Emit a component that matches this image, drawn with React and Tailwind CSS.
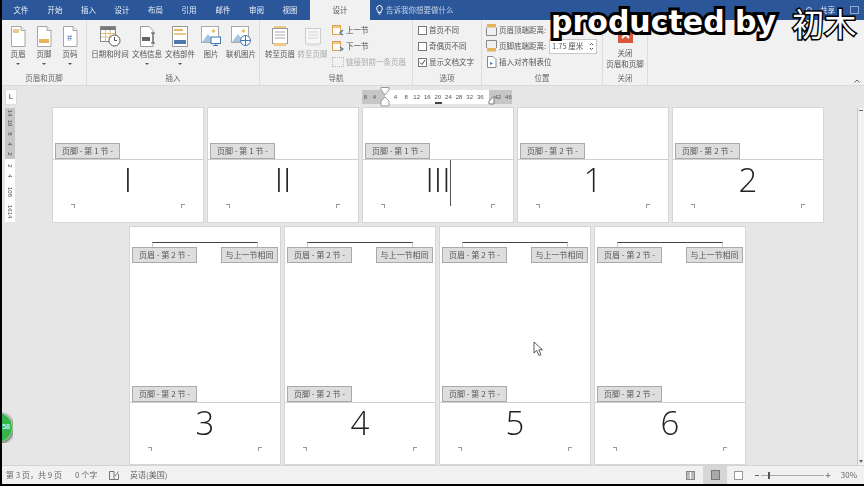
import React from "react";

const tabs = [
  ["文件", "w-[34px]"],
  ["开始", "w-[34px]"],
  ["插入", "w-[33px]"],
  ["设计", "w-[34px]"],
  ["布局", "w-[33px]"],
  ["引用", "w-[34px]"],
  ["邮件", "w-[34px]"],
  ["审阅", "w-[33px]"],
  ["视图", "w-[34px]"],
];

const rulerNums = ["8", "4", "", "4", "8", "12", "16", "20", "24", "28", "32", "36", "", "42", "46"];

const DocIcon = ({ kind }) => (
  <svg width="16" height="21" viewBox="0 0 16 21">
    <path d="M1.5 .5H11L15 4.500V20.500H1.500Z" fill="#fff" stroke="#a6a6a6" />
    <path d="M11 .5V4.500H15" fill="#eee" stroke="#a6a6a6" />
    {kind === "header" && <rect x="3" y="3" width="6" height="4" fill="#edc987" />}
    {kind === "footer" && <rect x="3" y="13" width="10" height="4" fill="#e8b35e" />}
    {kind === "number" && <text x="5" y="15" fontSize="9" fontStyle="italic" fill="#4a6da7" fontFamily="Liberation Sans">#</text>}
  </svg>
);

const CalendarIcon = () => (
  <svg width="21" height="21" viewBox="0 0 21 21">
    <rect x=".5" y=".5" width="15" height="15" fill="#fff" stroke="#8a8a8a" />
    <rect x="1" y="1" width="14" height="3" fill="#777" />
    <path d="M1 7.500H15M1 11H15M5.500 4V15M10 4V15" stroke="#e3bd79" />
    <circle cx="14.500" cy="14.500" r="5.500" fill="#fff" stroke="#555" />
    <path d="M14.500 11V14.500H17" fill="none" stroke="#555" />
  </svg>
);

const InfoIcon = () => (
  <svg width="17" height="21" viewBox="0 0 17 21">
    <path d="M1.500 .5H10L14 4.500V20.500H1.500Z" fill="#fff" stroke="#999" />
    <rect x="3" y="11" width="8" height="4" fill="#666" />
    <path d="M12 7H16M14 7V17M12 17H16" stroke="#555" fill="none" />
  </svg>
);

const PartsIcon = () => (
  <svg width="16" height="21" viewBox="0 0 16 21">
    <rect x=".5" y=".5" width="15" height="20" fill="#fff" stroke="#999" />
    <rect x="2" y="3" width="9" height="2" fill="#e5b66a" />
    <rect x="2" y="7" width="12" height="2" fill="#e5c68f" />
    <rect x="2" y="14" width="12" height="4" fill="#4d77ae" />
  </svg>
);

const PictureIcon = ({ online }) => (
  <svg width="20" height="20" viewBox="0 0 20 20">
    <rect x=".5" y=".5" width="17" height="16" fill="#fff" stroke="#aaa" />
    <circle cx="12.500" cy="5" r="1.800" fill="#ecc06f" />
    <path d="M1 16L7 8L13 16Z" fill="#a9c4e0" />
    {online ? (
      <g fill="#fff" stroke="#3f76b5">
        <circle cx="14.500" cy="14.500" r="5" />
        <path d="M9.500 14.500H19.500M14.500 9.500V19.500" fill="none" />
      </g>
    ) : (
      <g>
        <rect x="10" y="11" width="9.500" height="6.500" fill="#fff" stroke="#3f76b5" />
        <path d="M14.800 17.500V19.500M12 19.500H17" stroke="#3f76b5" />
      </g>
    )}
  </svg>
);

const GotoIcon = ({ disabled, footer }) => (
  <svg width="16" height="20" viewBox="0 0 16 20" className={disabled ? "opacity-40" : ""}>
    {!footer && <rect x="2" y="0" width="12" height="3" fill="#edc987" />}
    <rect x=".5" y="2.500" width="15" height="15" fill="#fff" stroke="#999" />
    <path d="M3 6H13M3 9H13M3 12H13" stroke="#aaa" />
    <rect x="2" y="17" width="12" height="3" fill={footer ? "#ccc" : "#edc987"} />
  </svg>
);

const SmallIcon = ({ dir }) => (
  <svg width="12" height="12" viewBox="0 0 12 12">
    <rect x=".5" y="1.500" width="8" height="9" fill="#fff" stroke="#e0a24f" />
    <rect x="1" y="2" width="7" height="2" fill="#edc987" />
    <path d={dir === "up" ? "M11 6L8 9L11 11" : "M8 7L11 9L8 11"} fill="none" stroke="#3f76b5" strokeWidth="1.300" />
  </svg>
);

const PosIcon = ({ top }) => (
  <svg width="11" height="12" viewBox="0 0 11 12">
    <rect x="1" y={top ? 0 : 8} width="9" height="3.500" fill="#e8b35e" />
    <path d={top ? "M.5 3.500V11.500H10.500V3.500" : "M.5 8V.5H10.500V8"} fill="none" stroke="#888" />
  </svg>
);

const RibbonButton = ({ label, width, icon, caret, grey }) => (
  <div className={`${width} flex flex-col items-center pt-[5px]`}>
    <div className="h-[22px] flex items-center justify-center">{icon}</div>
    <span className={`mt-[1px] h-[11px] whitespace-nowrap leading-[11px] ${grey ? "text-[#aaa]" : ""}`}>{label}</span>
    {caret && <span className="mt-[4px] h-0 w-0 border-x-[2px] border-t-[2px] border-x-transparent border-t-[#555]" />}
  </div>
);

const Group = ({ label, width, children, className = "" }) => (
  <div className={`${width} h-full shrink-0 flex flex-col border-r border-[#dcdcdc]`}>
    <div className={`h-[52px] flex ${className}`}>{children}</div>
    <div className="h-[12px] text-center leading-[12px] text-[#666]">{label}</div>
  </div>
);

const OptionRow = ({ label, checked }) => (
  <div className="h-[16px] flex items-center gap-[2px]">
    <span className="w-[9px] h-[9px] bg-white border border-[#777] flex items-center justify-center">
      {checked && (
        <svg width="7" height="7" viewBox="0 0 7 7">
          <path d="M1 3.500L3 5.500L6 1" fill="none" stroke="#444" />
        </svg>
      )}
    </span>
    <span>{label}</span>
  </div>
);

const Tag = ({ children, className = "" }) => (
  <div className={`absolute h-[16px] bg-[#dedede] border border-[#a9a9a9] text-[#555] text-[8px] leading-[14px] text-center whitespace-nowrap ${className}`}>
    {children}
  </div>
);

const Corners = ({ className = "" }) => (
  <div className={`flex justify-between px-[18px] ${className}`}>
    <span className="w-[4px] h-[4px] border-t border-r border-[#999]" />
    <span className="w-[4px] h-[4px] border-t border-l border-[#999]" />
  </div>
);

const FooterNumber = ({ value, section, topHeight, caret }) => (
  <>
    <div className="relative" style={{ height: topHeight }}>
      <Tag className="left-[2px] bottom-0 w-[65px]">页脚 - 第 {section} 节 -</Tag>
    </div>
    <div className="relative flex-1 border-t border-[#cfcfcf] flex flex-col">
      <div className="h-[44px] pb-[6px] flex items-center justify-center leading-none text-[#222] text-[33px] font-[350] font-['Open_Sans']">
        {value}
      </div>
      <Corners />
      {caret && <div className="absolute left-[87px] top-0 w-[1px] h-[46px] bg-[#555]" />}
    </div>
  </>
);

const TopPage = ({ value, section, caret }) => (
  <div className="w-[150px] h-[114px] bg-white shadow-[0_0_0_1px_#d6d6d6] flex flex-col">
    <FooterNumber value={value} section={section} caret={caret} topHeight={51} />
  </div>
);

const BottomPage = ({ value }) => (
  <div className="w-[150px] h-[237px] bg-white shadow-[0_0_0_1px_#d6d6d6] flex flex-col">
    <div className="relative h-[20px] shrink-0">
      <div className="absolute left-[22px] top-[15px] w-[106px] h-[5px] border-t border-x border-t-[#444] border-x-[#ccc]" />
      <Tag className="left-[2px] top-[20px] w-[65px] z-10">页眉 - 第 2 节 -</Tag>
      <Tag className="right-[2px] top-[20px] w-[57px] z-10">与上一节相同</Tag>
    </div>
    <FooterNumber value={value} section={2} topHeight={155} />
  </div>
);

export default function App() {
  return (
    <div className="relative w-[864px] h-[486px] overflow-hidden bg-black text-[7.5px] text-[#555] font-['Noto_Sans_CJK_SC',sans-serif]">
      <div className="ml-[2px] h-[484px] flex flex-col bg-[#e6e6e6] blur-[0.3px]">
        {/* tabs */}
        <div className="h-[20px] shrink-0 bg-[#2b579a] flex items-center text-[#e8eef7]">
          <div className="pl-[2px] flex text-center">
            {tabs.map(([t, w]) => (
              <span key={t} className={w}>
                {t}
              </span>
            ))}
          </div>
          <div className="ml-[3px] w-[60px] h-full bg-[#f1f1f1] text-[#555] flex items-center justify-center">设计</div>
          <div className="ml-[6px] flex items-center gap-[3px] text-[#c5d3e8]">
            <svg width="7" height="10" viewBox="0 0 7 10">
              <path d="M3.500 .5A3 3 0 0 1 5 6V7.500H2V6A3 3 0 0 1 3.500 .5ZM2.500 9H4.500" fill="none" stroke="#fff" />
            </svg>
            告诉我你想要做什么
          </div>
          <span className="ml-auto mr-[8px] w-[6px] h-[6px] rounded-full border border-[#c5d3e8]" />
          <span className="mr-[15px] text-[#dfe6f2]">共享</span>
          <span className="mr-[5px] w-[9px] h-[8px] border border-[#8fa8cf]" />
        </div>

        {/* ribbon */}
        <div className="h-[66px] shrink-0 bg-[#f1f1f1] flex border-b border-[#dadada]">
          <Group label="页眉和页脚" width="w-[85px]" className="pl-[3px]">
            <RibbonButton label="页眉" width="w-[26px]" caret icon={<DocIcon kind="header" />} />
            <RibbonButton label="页脚" width="w-[26px]" caret icon={<DocIcon kind="footer" />} />
            <RibbonButton label="页码" width="w-[26px]" caret icon={<DocIcon kind="number" />} />
          </Group>
          <Group label="插入" width="w-[173px]" className="pl-[3px]">
            <RibbonButton label="日期和时间" width="w-[40px]" icon={<CalendarIcon />} />
            <RibbonButton label="文档信息" width="w-[34px]" caret icon={<InfoIcon />} />
            <RibbonButton label="文档部件" width="w-[32px]" caret icon={<PartsIcon />} />
            <RibbonButton label="图片" width="w-[30px]" icon={<PictureIcon />} />
            <RibbonButton label="联机图片" width="w-[30px]" icon={<PictureIcon online />} />
          </Group>
          <Group label="导航" width="w-[153px]" className="pl-[4px]">
            <RibbonButton label="转至页眉" width="w-[32px]" icon={<GotoIcon />} />
            <RibbonButton label="转至页脚" width="w-[33px]" grey icon={<GotoIcon disabled footer />} />
            <div className="ml-[3px] pt-[2px] flex flex-col">
              <div className="h-[16px] flex items-center gap-[2px]">
                <SmallIcon dir="up" />
                <span className="text-[#444]">上一节</span>
              </div>
              <div className="h-[16px] flex items-center gap-[2px]">
                <SmallIcon dir="down" />
                <span className="text-[#444]">下一节</span>
              </div>
              <div className="h-[16px] flex items-center gap-[2px] text-[#aaa]">
                <span className="w-[12px] h-[10px] border border-dotted border-[#bbb]" />
                链接到前一条页眉
              </div>
            </div>
          </Group>
          <Group label="选项" width="w-[69px]" className="pl-[5px] pt-[2px] flex-col">
            <OptionRow label="首页不同" />
            <OptionRow label="奇偶页不同" />
            <OptionRow label="显示文档文字" checked />
          </Group>
          <Group label="位置" width="w-[121px]" className="pl-[4px] pt-[2px] flex-col">
            <div className="h-[16px] flex items-center gap-[2px]">
              <PosIcon top />
              页眉顶端距离:
            </div>
            <div className="h-[16px] flex items-center gap-[2px]">
              <PosIcon />
              页脚底端距离:
              <div className="ml-[1px] w-[48px] h-[15px] bg-white border border-[#c8c8c8] flex items-center justify-between px-[2px]">
                1.75 厘米
                <svg width="5" height="9" viewBox="0 0 5 9">
                  <path d="M1 3L2.500 1.500L4 3M1 6L2.500 7.500L4 6" fill="none" stroke="#555" />
                </svg>
              </div>
            </div>
            <div className="h-[16px] flex items-center gap-[2px]">
              <svg width="11" height="12" viewBox="0 0 11 12">
                <path d="M1.500 .5H7L10 3.500V11.500H1.500Z" fill="#fff" stroke="#888" />
                <path d="M4 6L7 7.500L4 9Z" fill="#3f76b5" />
              </svg>
              插入对齐制表位
            </div>
          </Group>
          <Group label="关闭" width="w-[45px]" className="flex-col items-center">
            <div className="mt-[6px] w-[15px] h-[17px] bg-[#d9583b] flex items-center justify-center">
              <svg width="9" height="9" viewBox="0 0 9 9">
                <path d="M1 1L8 8M8 1L1 8" stroke="#fff" strokeWidth="2" />
              </svg>
            </div>
            <span className="mt-[4px] leading-[11px] text-center whitespace-nowrap">
              关闭
              <br />
              页眉和页脚
            </span>
          </Group>
          <div className="flex-1 flex items-end justify-end pr-[4px] pb-[2px]">
            <svg width="6" height="4" viewBox="0 0 6 4">
              <path d="M.5 3.500L3 1L5.500 3.500" fill="none" stroke="#666" />
            </svg>
          </div>
        </div>

        {/* horizontal ruler */}
        <div className="h-[22px] shrink-0 flex items-center relative">
          <div className="ml-[3px] w-[12px] h-[16px] bg-white border border-[#dcdcdc] flex items-center justify-center text-[8px] leading-none font-['Liberation_Sans'] text-[#444]">
            L
          </div>
          <div className="ml-[345px] h-[14px] w-[150px] relative bg-[linear-gradient(to_right,#c6c6c6_23px,#fff_23px,#fff_127px,#c6c6c6_127px)] flex items-center text-[6px] font-['Liberation_Sans'] text-[#555]">
            {rulerNums.map((n, i) => (
              <span key={i} className={`${i === 0 || i === 12 ? "w-[7px]" : "w-[10.6px]"} shrink-0 text-center`}>
                {n}
              </span>
            ))}
            <svg className="absolute left-[17px] top-[-3px]" width="12" height="20" viewBox="0 0 12 20">
              <path d="M2 .5H10V3L6 8L2 3ZM6 10L2 14V19H10V14Z" fill="#fff" stroke="#999" />
            </svg>
            <svg className="absolute left-[126px] top-[6px]" width="8" height="9" viewBox="0 0 8 9">
              <path d="M6 .5V8H1V5Z" fill="#fff" stroke="#777" />
            </svg>
            <span className="absolute left-[73px] top-[12px] w-[7px] h-[2px] bg-[#444]" />
          </div>
        </div>

        {/* document */}
        <div className="h-[357px] shrink-0 flex">
          <div className="w-[51px] shrink-0 pl-[3px]">
            <div className="w-[10px] h-[114px] flex flex-col font-['Liberation_Sans'] text-[6px] text-[#444] leading-none text-center">
              <div className="h-[51px] bg-[#c6c6c6] flex flex-col justify-between py-[2px]">
                <span className="rotate-90">14</span>
                <span className="rotate-90">10</span>
                <span className="rotate-90">8</span>
                <span className="rotate-90">4</span>
                <span className="rotate-90">2</span>
              </div>
              <div className="h-[63px] bg-white flex flex-col gap-[4px] pt-[4px]">
                <span className="rotate-90">2</span>
                <span className="rotate-90">4</span>
                <span className="rotate-90 mt-[6px]">108</span>
                <span className="rotate-90 mt-[8px]">1614</span>
              </div>
            </div>
          </div>
          <div className="flex-1 flex flex-col gap-[5px]">
            <div className="flex gap-[5px]">
              <TopPage value="I" section={1} />
              <TopPage value="II" section={1} />
              <TopPage value="III" section={1} caret />
              <TopPage value="1" section={2} />
              <TopPage value="2" section={2} />
            </div>
            <div className="flex gap-[5px] pl-[77px]">
              <BottomPage value="3" />
              <BottomPage value="4" />
              <BottomPage value="5" />
              <BottomPage value="6" />
            </div>
          </div>
          <div className="w-[7px] shrink-0 bg-[#f1f1f1] border-l border-[#c8c8c8] flex flex-col justify-between items-center text-[#666]">
            <span className="h-[4px] w-[4px] mt-[2px] border-t border-[#666]" />
            <span className="h-0 w-0 mb-[2px] border-x-[2px] border-t-[3px] border-x-transparent border-t-[#666]" />
          </div>
        </div>

        {/* status bar */}
        <div className="flex-1 bg-[#f1f1f1] border-t border-[#d4d4d4] flex items-center text-[8px] text-[#666]">
          <span className="ml-[4px] w-[69px]">第 3 页，共 9 页</span>
          <span className="w-[34px]">0 个字</span>
          <svg width="10" height="9" viewBox="0 0 10 9">
            <path d="M.5 .5H5V8.500H.5ZM5 8.500H9.500V3M6 5L9.500 .5" fill="none" stroke="#777" />
          </svg>
          <span className="ml-[11px]">英语(美国)</span>
          <div className="ml-auto flex items-center h-full">
            <span className="w-[9px] h-[9px] border border-[#888] bg-[linear-gradient(to_right,#bbb_45%,#fff_45%,#fff_55%,#bbb_55%)]" />
            <div className="ml-[8px] w-[24px] h-full bg-[#d6d6d6] flex items-center justify-center">
              <span className="w-[9px] h-[10px] bg-[#aaa] border border-[#777]" />
            </div>
            <span className="ml-[7px] w-[9px] h-[9px] border border-[#999] bg-white" />
            <span className="ml-[12px] w-[4px] h-[1px] bg-[#666]" />
            <div className="relative ml-[2px] w-[63px] h-[1px] bg-[#aaa]">
              <span className="absolute left-[7px] top-[-3px] w-[2px] h-[7px] bg-[#555]" />
            </div>
            <span className="ml-[1px] text-[10px] leading-none">+</span>
            <span className="ml-[10px] mr-[7px]">30%</span>
          </div>
        </div>
      </div>

      {/* over the page: video watermark, badge, pointer */}
      <div className="absolute left-[551px] top-[2px] flex items-center whitespace-nowrap text-white">
        <span className="text-[30px] leading-[40px] font-bold font-['DejaVu_Sans'] [-webkit-text-stroke:6px_#000] [paint-order:stroke_fill]">
          producted by
        </span>
        <span className="ml-[16px] text-[32px] leading-[40px] font-['Noto_Sans_CJK_SC'] [-webkit-text-stroke:3px_#000] [paint-order:stroke_fill]">
          初木
        </span>
      </div>
      <div className="absolute left-[2px] top-[412px] w-[11px] h-[31px] overflow-hidden">
        <div className="absolute right-0 top-0 w-[31px] h-[31px] rounded-full bg-[#35b44a] border border-[#9ed8a6] shadow-[1px_1px_3px_#666] flex items-center justify-end pr-[2px] text-[7px] text-white font-['Liberation_Sans']">
          58
        </div>
      </div>
      <svg className="absolute left-[533px] top-[341px]" width="11" height="16" viewBox="0 0 11 16">
        <path d="M1 1V12L3.700 9.500L6 14.500L8 13.500L5.800 8.800H9.500Z" fill="#fff" stroke="#333" strokeWidth=".8" />
      </svg>
    </div>
  );
}
